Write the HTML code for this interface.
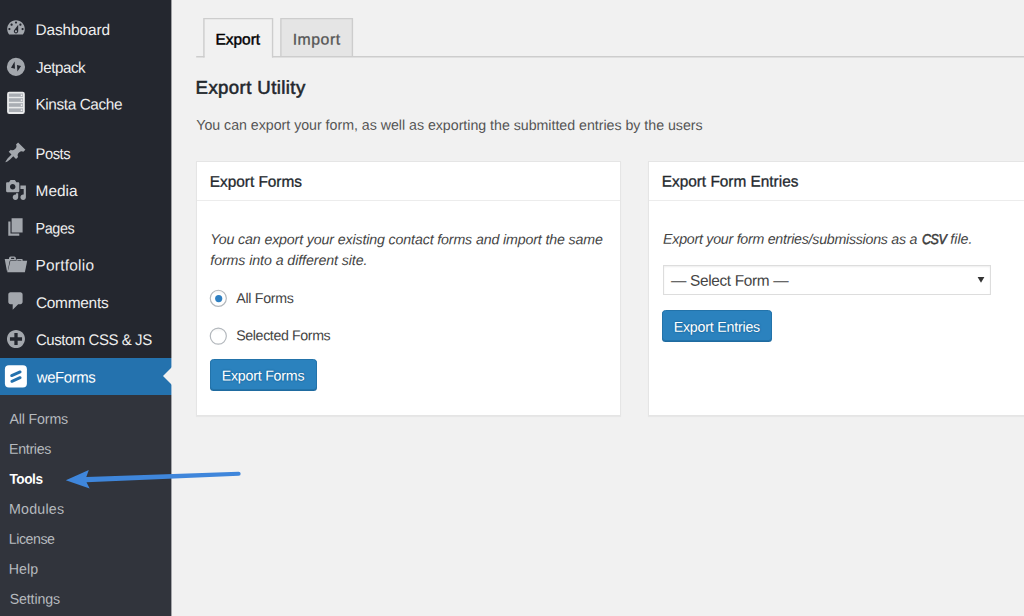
<!DOCTYPE html>
<html><head><meta charset="utf-8">
<style>
*{box-sizing:border-box;margin:0;padding:0}
html,body{width:1024px;height:616px;overflow:hidden;background:#f1f1f1;font-family:"Liberation Sans",sans-serif;}
#side{position:absolute;left:0;top:0;width:172px;height:616px;background:#24272f;}
#sub{position:absolute;left:0;top:395px;width:172px;height:221px;background:#31343c;}
#act{position:absolute;left:0;top:358px;width:172px;height:37px;background:#2472ae;}
#edge{position:absolute;left:171px;top:0;width:1px;height:616px;background:rgba(241,241,241,.6);}
#act:after{content:"";position:absolute;right:0;top:9px;border:9px solid transparent;border-right-color:#f1f1f1;border-left:0;}
.ic{position:absolute;}
.t{position:absolute;white-space:nowrap;color:#444;}
.card{position:absolute;background:#fff;border:1px solid #e5e5e5;box-shadow:0 1px 1px rgba(0,0,0,.04);}
.card .hd{position:absolute;left:0;right:0;top:0;height:39px;border-bottom:1px solid #ececec;}
.btn{position:absolute;background:#2b82be;border:1px solid #2373aa;border-radius:3.500px;box-shadow:0 1px 0 #1f6ba0;color:#fff;white-space:nowrap;text-align:center;}
</style></head><body>
<div id="side"></div><div id="sub"></div><div id="act"></div><div id="edge"></div>

<svg class="ic" style="left:4.7px;top:17.4px" width="22" height="22" viewBox="0 0 20 20"><path fill="#a3a7ad" d="M3.76 16h12.48c1.1-1.37 1.76-3.11 1.76-5 0-4.42-3.58-8-8-8s-8 3.58-8 8c0 1.89.66 3.63 1.76 5zM10 4c.55 0 1 .45 1 1s-.45 1-1 1-1-.45-1-1 .45-1 1-1zM6 6c.55 0 1 .45 1 1s-.45 1-1 1-1-.45-1-1 .45-1 1-1zm8 0c.55 0 1 .45 1 1s-.45 1-1 1-1-.45-1-1 .45-1 1-1zm-5.37 5.55L12 7v6c0 1.1-.9 2-2 2s-2-.9-2-2c0-.57.24-1.08.63-1.45zM4 10c.55 0 1 .45 1 1s-.45 1-1 1-1-.45-1-1 .45-1 1-1zm12 0c.55 0 1 .45 1 1s-.45 1-1 1-1-.45-1-1 .45-1 1-1zm-5 3c0-.55-.45-1-1-1s-1 .45-1 1 .45 1 1 1 1-.45 1-1z"/></svg>
<svg class="ic" style="left:0;top:50px" width="34" height="34" viewBox="0 50 34 34"><path fill="#a3a7ad" fill-rule="evenodd" d="M15.95 57.8a9.1 9.1 0 1 0 0 18.2a9.1 9.1 0 1 0 0-18.2zM14.6 61.5L11 67.7L15 68.8zM17 65.1L21.1 66L17.4 71.5z"/></svg>
<svg class="ic" style="left:0;top:86px" width="34" height="34" viewBox="0 86 34 34">
<rect x="7.1" y="91.7" width="17.7" height="22.2" rx="2.2" fill="#e9eaeb"/>
<rect x="8.9" y="93.5" width="14.1" height="3.3" fill="#a9adb3"/>
<rect x="8.9" y="98.2" width="14.1" height="3.6" fill="#a9adb3"/>
<rect x="8.9" y="103.2" width="14.1" height="3.6" fill="#a9adb3"/>
<rect x="8.9" y="108.4" width="14.1" height="3.6" fill="#a9adb3"/>
<rect x="20.8" y="94.5" width="1.5" height="1.5" fill="#f4f4f4"/>
<rect x="20.8" y="99.4" width="1.5" height="1.5" fill="#f4f4f4"/>
<rect x="20.8" y="104.4" width="1.5" height="1.5" fill="#f4f4f4"/>
<rect x="20.8" y="109.5" width="1.5" height="1.5" fill="#f4f4f4"/>
</svg>
<svg class="ic" style="left:4.200px;top:140.800px" width="23" height="23" viewBox="0 0 20 20"><path fill="#a3a7ad" d="M10.44 3.02l1.82-1.82 6.36 6.35-1.83 1.82c-1.05-.68-2.48-.57-3.41.36l-.75.75c-.92.93-1.04 2.35-.35 3.41l-1.83 1.82-2.41-2.41-2.8 2.79c-.42.42-3.38 2.71-3.8 2.29s1.86-3.39 2.28-3.81l2.79-2.79L4.1 9.36l1.83-1.82c1.05.69 2.48.57 3.4-.36l.75-.75c.93-.92 1.05-2.35.36-3.41z"/></svg>
<svg class="ic" style="left:4.7px;top:178.5px" width="22" height="22" viewBox="0 0 20 20"><path fill="#a3a7ad" d="M13 11V4c0-.55-.45-1-1-1h-1.67L9 1H5L3.67 3H2c-.55 0-1 .45-1 1v7c0 .55.45 1 1 1h10c.55 0 1-.45 1-1zM7 4.5c1.38 0 2.5 1.12 2.5 2.5S8.38 9.5 7 9.5 4.5 8.38 4.5 7 5.62 4.5 7 4.5zM14 6h5v10.5c0 1.38-1.12 2.5-2.5 2.5S14 17.88 14 16.500s1.12-2.5 2.5-2.5c.17 0 .34.02.5.05V9h-3V6zm-4 8.050V13h2v3.5c0 1.38-1.12 2.5-2.5 2.500S7 17.880 7 16.500 8.120 14 9.500 14c.17 0 .34.02.5.05z"/></svg>
<svg class="ic" style="left:4.7px;top:215.8px" width="22" height="22" viewBox="0 0 20 20"><path fill="#a3a7ad" d="M6 15V2h10v13H6zm-1 1h8v2H3V5h2v11z"/></svg>
<svg class="ic" style="left:0;top:249px" width="34" height="34" viewBox="0 249 34 34">
<path fill="#a3a7ad" fill-rule="evenodd" d="M4.700 259.100H9V258.300Q9 256.500 10.800 256.500H14.100Q15.900 256.500 15.900 258.300V259.700H16.400Q16.400 258.900 17.600 258.900H21.600Q22.800 258.900 22.800 260.100V260.800H21V260.200H17.600V260.800H16.400V260.250H10.800Q9.800 260.250 9.600 261.200L7.600 271.500L7.200 272.400ZM11.100 257.800H14.200V258.900H11.100Z"/>
<path fill="#a3a7ad" d="M10.400 260.750H27.200L24.900 272.200H7.600Z"/>
</svg>
<svg class="ic" style="left:4.7px;top:290.3px" width="22" height="22" viewBox="0 0 20 20"><path fill="#a3a7ad" d="M5 2h9c1.1 0 2 .9 2 2v7c0 1.1-.9 2-2 2h-2l-5 5v-5H5c-1.1 0-2-.9-2-2V4c0-1.1.9-2 2-2z"/></svg>
<svg class="ic" style="left:4.9px;top:327.6px" width="22" height="22" viewBox="0 0 20 20"><path fill="#a3a7ad" d="M15.8 4.2c3.2 3.21 3.2 8.39 0 11.6-3.21 3.2-8.39 3.2-11.6 0C1 12.59 1 7.41 4.2 4.2 7.41 1 12.59 1 15.800 4.200zm-4.300 11.300v-4h4v-3h-4v-4h-3v4h-4v3h4v4h3z"/></svg>
<svg class="ic" style="left:0;top:360px" width="34" height="34" viewBox="0 360 34 34">
<rect x="4.9" y="365.200" width="22" height="22.300" rx="4" fill="#fff"/>
<path d="M11.700 375.600L20.100 371.900M11.900 381.300L20.100 377.700" stroke="#2472ae" stroke-width="2.900" stroke-linecap="round" fill="none"/>
</svg>
<!-- tabs -->
<svg style="position:absolute;left:190px;top:10px" width="834" height="54" viewBox="190 10 834 54">
<rect x="280.900" y="18.600" width="71.500" height="37.600" fill="#e5e5e5"/>
<path d="M196.200 56.750H204.500M272 56.750H1024" stroke="#cdcdcd" stroke-width="1.400" fill="none"/>
<path d="M203.900 57.450V18.600H272.550V57.450" stroke="#cdcdcd" stroke-width="1.400" fill="none"/>
<path d="M280.900 56.750V18.600H352.400V56.750" stroke="#cdcdcd" stroke-width="1.400" fill="none"/>
</svg>

<div class="card" style="left:196px;top:161px;width:425px;height:255px"><div class="hd"></div></div>
<div class="card" style="left:648px;top:161px;width:400px;height:255px"><div class="hd"></div></div>

<!-- radios -->
<svg style="position:absolute;left:204px;top:284px" width="32" height="66" viewBox="204 284 32 66">
<defs><linearGradient id="rg" x1="0" y1="0" x2="0" y2="1"><stop offset="0" stop-color="#f1f1f1"/><stop offset=".25" stop-color="#fff"/></linearGradient></defs>
<circle cx="218.300" cy="298.300" r="8.050" fill="url(#rg)" stroke="#b2b7bc" stroke-width="1.150"/>
<circle cx="218.700" cy="298.600" r="3.600" fill="#2f80c2"/>
<circle cx="218.300" cy="336.100" r="8.050" fill="url(#rg)" stroke="#b2b7bc" stroke-width="1.150"/>
</svg>
<!-- select -->
<div style="position:absolute;left:663px;top:265px;width:328px;height:30px;background:#fff;border:1px solid #ddd;box-shadow:inset 0 1px 2px rgba(0,0,0,.07)"></div>
<svg style="position:absolute;left:976px;top:275px" width="10" height="10" viewBox="976 275 10 10"><path d="M977.600 276.900h6.800l-3.400 5.900z" fill="#333"/></svg>

<div class="btn" style="left:209.5px;top:359.300px;width:107.500px;height:31px;"></div>
<div class="btn" style="left:662px;top:310px;width:110px;height:31px;"></div>

<!-- arrow -->
<svg style="position:absolute;left:56px;top:455px" width="200" height="50" viewBox="56 455 200 50">
<path d="M65.800 480.200L88.800 470L86.300 477.100L238.500 471.750a2.050 2.050 0 0 1 .2 4.100L86.500 482.300L89.700 488.500z" fill="#3f86db"/>
</svg>
<div class="t" style="left:35px;top:20px;font-size:15.4px;line-height:20px;letter-spacing:-0.104px;color:#eeeeee;transform:translate(0.50px,0.00px) rotate(0.03deg);transform-origin:0 15px;">Dashboard</div>
<div class="t" style="left:36px;top:57px;font-size:15.4px;line-height:20px;letter-spacing:-0.450px;color:#eeeeee;transform:translate(0.00px,0.75px) rotate(0.03deg) scaleX(0.9853);transform-origin:0 15px;">Jetpack</div>
<div class="t" style="left:35px;top:94px;font-size:15.4px;line-height:20px;letter-spacing:-0.416px;color:#eeeeee;transform:translate(0.50px,0.50px) rotate(0.03deg);transform-origin:0 15px;">Kinsta Cache</div>
<div class="t" style="left:35px;top:143px;font-size:15.4px;line-height:20px;letter-spacing:-0.450px;color:#eeeeee;transform:translate(0.54px,0.90px) rotate(0.03deg) scaleX(0.9557);transform-origin:0 15px;">Posts</div>
<div class="t" style="left:35px;top:180px;font-size:15.4px;line-height:20px;letter-spacing:0.060px;color:#eeeeee;transform:translate(0.50px,0.90px) rotate(0.03deg);transform-origin:0 15px;">Media</div>
<div class="t" style="left:35px;top:218px;font-size:15.4px;line-height:20px;letter-spacing:-0.450px;color:#eeeeee;transform:translate(0.56px,0.40px) rotate(0.03deg) scaleX(0.9357);transform-origin:0 15px;">Pages</div>
<div class="t" style="left:35px;top:255px;font-size:15.4px;line-height:20px;letter-spacing:0.250px;color:#eeeeee;transform:translate(0.50px,0.40px) rotate(0.03deg);transform-origin:0 15px;">Portfolio</div>
<div class="t" style="left:35px;top:292px;font-size:15.4px;line-height:20px;letter-spacing:-0.230px;color:#eeeeee;transform:translate(0.90px,0.90px) rotate(0.03deg);transform-origin:0 15px;">Comments</div>
<div class="t" style="left:35px;top:329px;font-size:15.4px;line-height:20px;letter-spacing:-0.450px;color:#eeeeee;transform:translate(0.90px,0.90px) rotate(0.03deg) scaleX(0.9735);transform-origin:0 15px;">Custom CSS &amp; JS</div>
<div class="t" style="left:36px;top:367px;font-size:15.4px;line-height:20px;letter-spacing:-0.450px;color:#fff;transform:translate(0.87px,0.40px) rotate(0.03deg) scaleX(0.9712);transform-origin:0 15px;">weForms</div>
<div class="t" style="left:9px;top:408px;font-size:14.2px;line-height:20px;letter-spacing:-0.139px;color:#b6babf;transform:translate(0.40px,0.75px) rotate(0.03deg);transform-origin:0 15px;">All Forms</div>
<div class="t" style="left:9px;top:438px;font-size:14.2px;line-height:20px;letter-spacing:-0.302px;color:#b6babf;transform:translate(0.00px,0.75px) rotate(0.03deg);transform-origin:0 15px;">Entries</div>
<div class="t" style="left:9px;top:468px;font-size:14.2px;line-height:20px;letter-spacing:-0.450px;color:#fff;transform:translate(0.40px,0.75px) rotate(0.03deg) scaleX(0.9605);transform-origin:0 15px;font-weight:bold;">Tools</div>
<div class="t" style="left:9px;top:498px;font-size:14.2px;line-height:20px;letter-spacing:0.245px;color:#b6babf;transform:translate(0.00px,0.75px) rotate(0.03deg);transform-origin:0 15px;">Modules</div>
<div class="t" style="left:8px;top:528px;font-size:14.2px;line-height:20px;letter-spacing:-0.450px;color:#b6babf;transform:translate(0.80px,0.80px) rotate(0.03deg) scaleX(0.9976);transform-origin:0 15px;">License</div>
<div class="t" style="left:8px;top:558px;font-size:14.2px;line-height:20px;letter-spacing:0.037px;color:#b6babf;transform:translate(0.80px,0.80px) rotate(0.03deg);transform-origin:0 15px;">Help</div>
<div class="t" style="left:9px;top:588px;font-size:14.2px;line-height:20px;letter-spacing:-0.124px;color:#b6babf;transform:translate(0.70px,0.80px) rotate(0.03deg);transform-origin:0 15px;">Settings</div>
<div class="t" style="left:215px;top:29px;font-size:15.4px;line-height:20px;letter-spacing:0.039px;color:#000;transform:translate(0.40px,0.40px) rotate(0.03deg);transform-origin:0 15px;-webkit-text-stroke:0.45px #000;">Export</div>
<div class="t" style="left:292px;top:29px;font-size:15.4px;line-height:20px;letter-spacing:0.500px;color:#555;transform:translate(0.67px,0.40px) rotate(0.03deg) scaleX(1.0275);transform-origin:0 15px;-webkit-text-stroke:0.3px #555;">Import</div>
<div class="t" style="left:195px;top:77px;font-size:18.6px;line-height:20px;letter-spacing:0.403px;color:#23282d;transform:translate(0.60px,0.80px) rotate(0.03deg);transform-origin:0 15px;-webkit-text-stroke:0.55px #23282d;">Export Utility</div>
<div class="t" style="left:196px;top:114px;font-size:14.2px;line-height:20px;letter-spacing:-0.012px;color:#555;transform:translate(0.25px,0.75px) rotate(0.03deg);transform-origin:0 15px;">You can export your form, as well as exporting the submitted entries by the users</div>
<div class="t" style="left:209px;top:171px;font-size:15.4px;line-height:20px;letter-spacing:-0.024px;color:#23282d;transform:translate(0.80px,0.70px) rotate(0.03deg);transform-origin:0 15px;-webkit-text-stroke:0.3px #23282d;">Export Forms</div>
<div class="t" style="left:661px;top:171px;font-size:15.4px;line-height:20px;letter-spacing:-0.008px;color:#23282d;transform:translate(0.70px,0.50px) rotate(0.03deg);transform-origin:0 15px;-webkit-text-stroke:0.3px #23282d;">Export Form Entries</div>
<div class="t" style="left:210px;top:229px;font-size:14.2px;line-height:20px;letter-spacing:-0.130px;color:#444;transform:translate(0.20px,0.10px) rotate(0.03deg);transform-origin:0 15px;font-style:italic;">You can export your existing contact forms and import the same</div>
<div class="t" style="left:210px;top:250px;font-size:14.2px;line-height:20px;letter-spacing:-0.079px;color:#444;transform:translate(0.30px,0.00px) rotate(0.03deg);transform-origin:0 15px;font-style:italic;">forms into a different site.</div>
<div class="t" style="left:236px;top:288px;font-size:14.2px;line-height:20px;letter-spacing:-0.289px;color:#444;transform:translate(0.25px,0.00px) rotate(0.03deg);transform-origin:0 15px;">All Forms</div>
<div class="t" style="left:236px;top:325px;font-size:14.2px;line-height:20px;letter-spacing:-0.377px;color:#444;transform:translate(0.25px,0.20px) rotate(0.03deg);transform-origin:0 15px;">Selected Forms</div>
<div class="t" style="left:671px;top:270px;font-size:15.4px;line-height:20px;letter-spacing:-0.343px;color:#444;transform:translate(0.10px,0.70px) rotate(0.03deg);transform-origin:0 15px;">— Select Form —</div>
<div class="t" style="left:663px;top:228px;font-size:14.2px;line-height:20px;letter-spacing:-0.246px;color:#444;transform:translate(0.10px,0.80px) rotate(0.03deg);transform-origin:0 15px;font-style:italic;">Export your form entries/submissions as a</div>
<div class="t" style="left:922px;top:228px;font-size:14.2px;line-height:20px;letter-spacing:-0.450px;color:#3c3c3c;transform:translate(0.00px,0.80px) rotate(0.03deg) scaleX(0.8789);transform-origin:0 15px;font-style:italic;-webkit-text-stroke:0.55px #3c3c3c;">CSV</div>
<div class="t" style="left:950px;top:228px;font-size:14.2px;line-height:20px;letter-spacing:-0.009px;color:#444;transform:translate(0.30px,0.80px) rotate(0.03deg);transform-origin:0 15px;font-style:italic;">file.</div>
<div class="t" style="left:221px;top:365px;font-size:14.2px;line-height:20px;letter-spacing:-0.213px;color:#fff;transform:translate(0.70px,0.50px) rotate(0.03deg);transform-origin:0 15px;text-shadow:0 -1px 1px #2373aa,1px 0 1px #2373aa,0 1px 1px #2373aa,-1px 0 1px #2373aa;">Export Forms</div>
<div class="t" style="left:673px;top:316px;font-size:14.2px;line-height:20px;letter-spacing:-0.201px;color:#fff;transform:translate(0.70px,0.70px) rotate(0.03deg);transform-origin:0 15px;text-shadow:0 -1px 1px #2373aa,1px 0 1px #2373aa,0 1px 1px #2373aa,-1px 0 1px #2373aa;">Export Entries</div>
</body></html>
